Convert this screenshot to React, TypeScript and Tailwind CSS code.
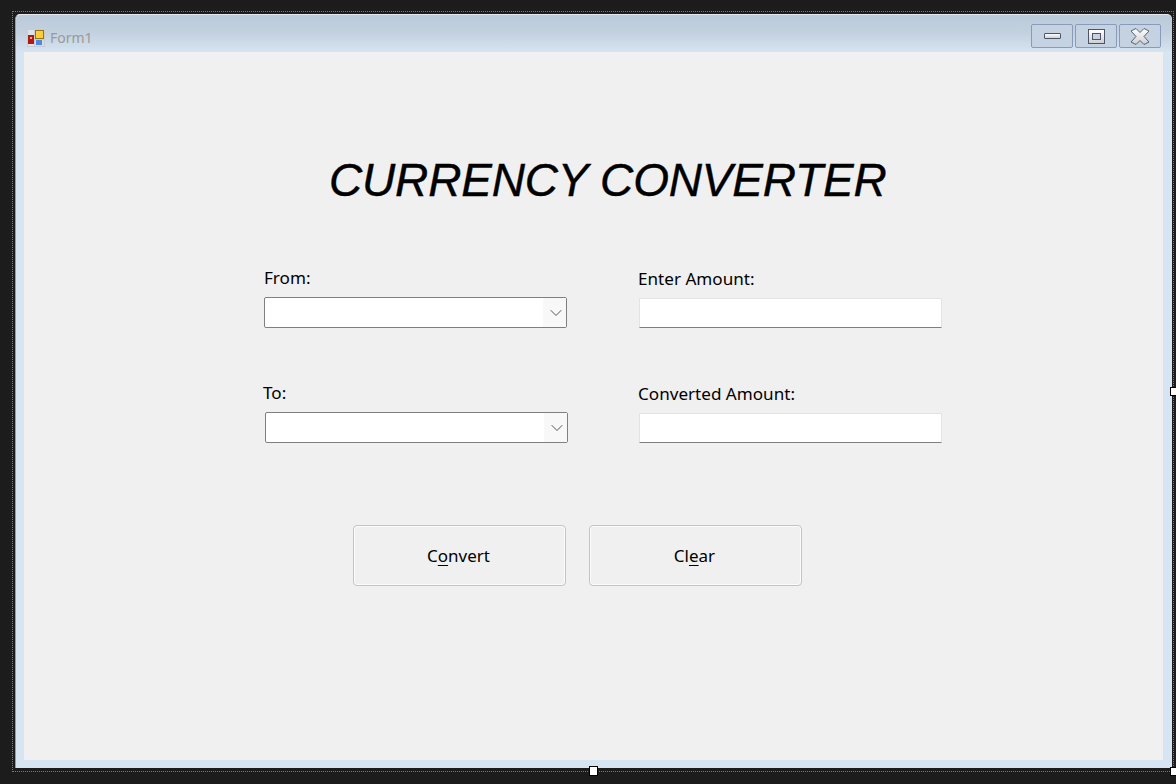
import { ChevronDown } from "lucide-react";

const labelFont = "font-['Noto_Sans','Open_Sans',sans-serif] text-[17.1px] leading-[24px] text-black";

function Combo({ label, className, labelClass }: { label: string; className: string; labelClass: string }) {
  return (
    <div className={`w-[303px] ${className}`}>
      <div className={`${labelFont} ${labelClass}`}>{label}</div>
      <div className="flex h-[31px] rounded-[2px] border border-[#7f7f7f] bg-white">
        <div className="flex-1" />
        <div className="flex w-[23px] items-center justify-center bg-[#f8f8f8] pl-[3px]">
          <ChevronDown className="h-[20px] w-[20px] text-[#555555]" strokeWidth={1.2} />
        </div>
      </div>
    </div>
  );
}

function AmountBox({ label, className }: { label: string; className: string }) {
  return (
    <div className={`w-[303px] ${className}`}>
      <div className={`${labelFont} -ml-px mb-[7px]`}>{label}</div>
      <input
        readOnly
        className="block h-[30px] w-[303px] rounded-[1px] border border-[#e3e3e3] border-b-[#7f7f7f] bg-white"
      />
    </div>
  );
}

function FormButton({ before, ul, after }: { before: string; ul: string; after: string }) {
  return (
    <button className="h-[61px] w-[213px] rounded-[4px] border border-[#c4c4c4] bg-[#f0f0f0] pr-[2px] font-['Noto_Sans','Open_Sans',sans-serif] text-[17px] leading-[24px] text-black shadow-[inset_0_0_0_1px_#fbfbfb]">
      {before}
      <span className="underline decoration-1 underline-offset-[3px]">{ul}</span>
      {after}
    </button>
  );
}

function AppIcon() {
  return (
    <svg width="18" height="18" viewBox="0 0 18 18" className="mr-[5px]">
      <rect x="0" y="0" width="18" height="18" fill="#c9ccd2" />
      <rect x="1" y="1" width="6" height="16" fill="#dfe3e8" />
      <rect x="1" y="6" width="6" height="9" fill="#b5170f" />
      <rect x="3" y="8" width="2" height="2" fill="#f3b7a8" />
      <rect x="8" y="1" width="9" height="9" fill="#9a7408" />
      <rect x="9" y="2" width="7" height="7" fill="#fbcf3c" />
      <rect x="8" y="11" width="9" height="6" fill="#d5dbe4" />
      <rect x="9" y="11" width="6" height="5" fill="#4f8ae0" />
    </svg>
  );
}

function CaptionButton({ children }: { children: React.ReactNode }) {
  return (
    <div className="flex h-[24px] w-[42px] items-center justify-center rounded-[2px] border border-[#8a9abb] bg-[#c4d2e1]">
      {children}
    </div>
  );
}

export default function App() {
  return (
    <div className="relative h-[784px] w-[1176px] overflow-hidden bg-[#1c1c1c] pl-[15px] pt-[14px]">
      <div className="relative h-[754px] w-[1157px] rounded-t-[5px] border-l border-t border-[#e6e9ee] border-l-[#9a9a9a] bg-[#d7e5f3]">
        <div className="flex h-[37px] items-center rounded-t-[5px] bg-gradient-to-b from-[#bbcada] via-[#c3d1e0] to-[#d6e4f2] pl-[11px] pr-[11px] pt-[8px]">
          <AppIcon />
          <span className="font-['Noto_Sans','Open_Sans',sans-serif] text-[14px] text-[#9a9a9a]">Form1</span>
          <div className="ml-auto flex gap-[2px] pb-[4px] pt-[1px]">
            <CaptionButton>
              <div className="h-[6px] w-[17px] rounded-[1px] border border-[#4c5468] bg-gradient-to-b from-white to-[#d0d0d0]" />
            </CaptionButton>
            <CaptionButton>
              <div className="flex h-[15px] w-[17px] items-center justify-center border border-[#4c5468] bg-gradient-to-b from-white to-[#d0d0d0]">
                <div className="h-[7px] w-[9px] border border-[#4c5468] bg-[#c4d2e1]" />
              </div>
            </CaptionButton>
            <CaptionButton>
              <svg width="20" height="17" viewBox="0 0 20 17">
                <defs>
                  <linearGradient id="cl" x1="0" y1="0" x2="0" y2="1">
                    <stop offset="0" stopColor="#ffffff" />
                    <stop offset="1" stopColor="#cfcfcf" />
                  </linearGradient>
                </defs>
                <path
                  d="M1 3 L6 .5 L10 4.5 L14 .5 L19 3 L14 8.5 L19 14 L14 16.5 L10 12.5 L6 16.5 L1 14 L6 8.5 Z"
                  fill="url(#cl)"
                  stroke="#4c5468"
                  strokeWidth="0.9"
                />
              </svg>
            </CaptionButton>
          </div>
        </div>

        <div className="ml-[8px] h-[708px] w-[1139px] bg-[#f0f0f0]">
          <div className="pl-[305px] pt-[100px] font-['Liberation_Sans',sans-serif] text-[46px] italic leading-[56px] tracking-[-0.17px] text-black whitespace-nowrap [-webkit-text-stroke:0.4px_black]">
            CURRENCY CONVERTER
          </div>

          <div className="mt-[58px] flex">
            <div className="ml-[240px] flex flex-col">
              <Combo label="From:" className="" labelClass="mb-[7px]" />
              <Combo label="To:" className="ml-px mt-[53px]" labelClass="-ml-[2px] mb-[7px]" />
            </div>
            <div className="ml-[70px] flex flex-col">
              <AmountBox label="Enter Amount:" className="ml-px mt-px" />
              <AmountBox label="Converted Amount:" className="ml-px mt-[54px]" />
            </div>
          </div>

          <div className="ml-[329px] mt-[82px] flex gap-[23px]">
            <FormButton before="C" ul="o" after="nvert" />
            <FormButton before="Cl" ul="e" after="ar" />
          </div>
        </div>
      </div>

      {/* designer selection frame + grips */}
      <div className="pointer-events-none absolute left-[12px] top-[11px] h-[761px] w-[1162px] border border-dotted border-[#7a7a7a]" />
      <div className="absolute left-[1170px] top-[387px] h-[9px] w-[8px] border border-black bg-white" />
      <div className="absolute left-[589px] top-[766px] h-[10px] w-[9px] border border-black bg-white" />
      <div className="absolute left-[1170px] top-[767px] h-[9px] w-[8px] border border-black bg-white" />
    </div>
  );
}
